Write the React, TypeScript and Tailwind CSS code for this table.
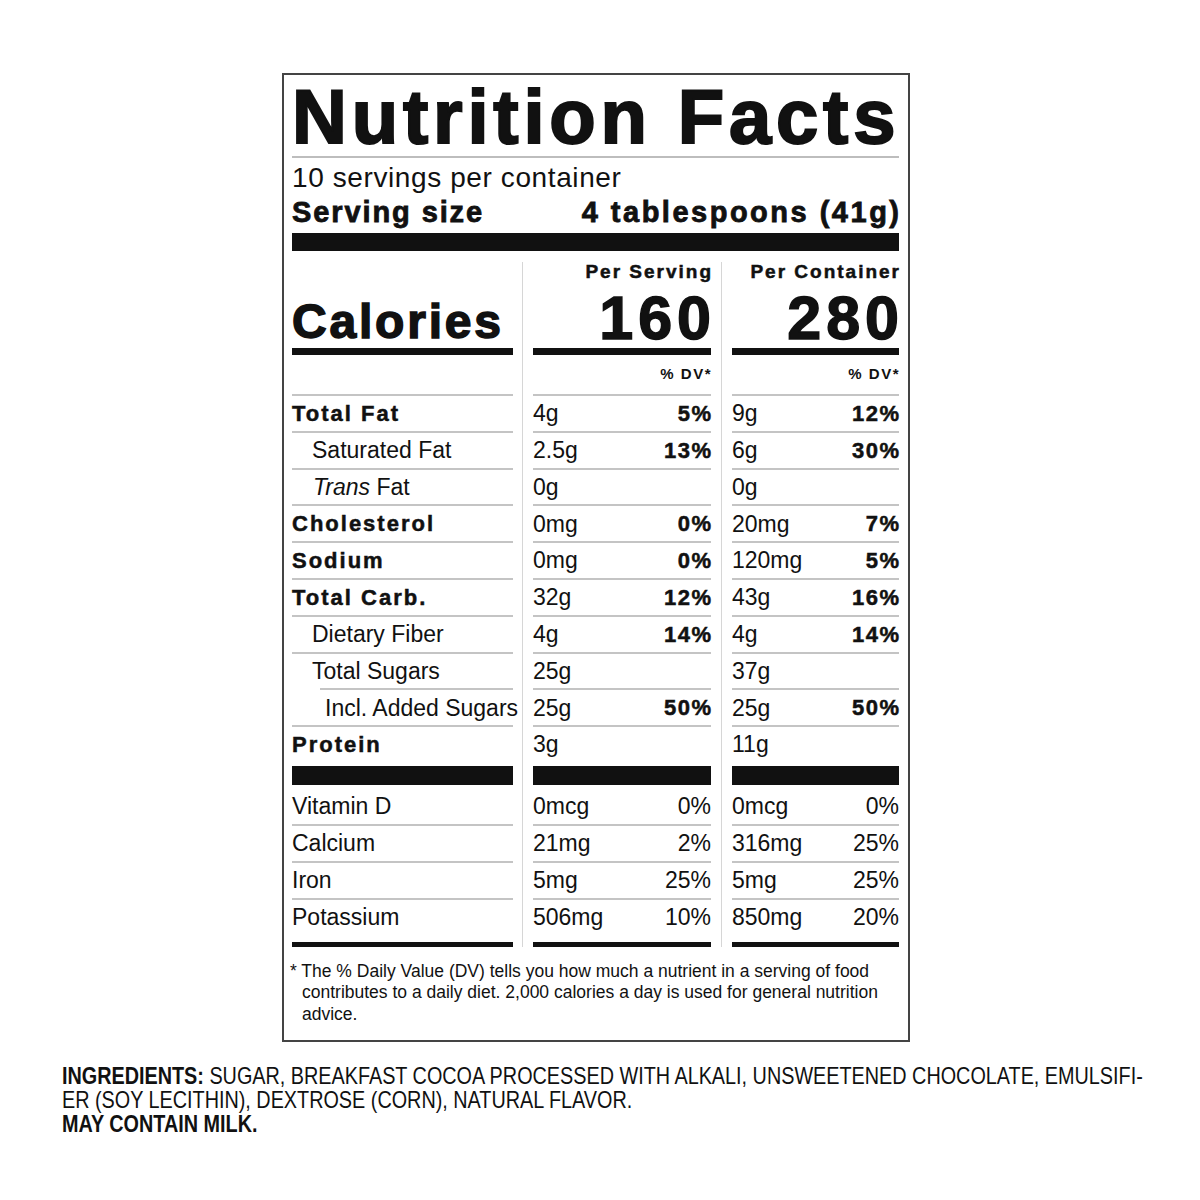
import type { ReactNode } from "react";

const rule = "h-[2px] bg-[#c4c4c4]";
const heavy = "font-bold [-webkit-text-stroke:0.5px_#111]";

type Nutrient = {
  label: ReactNode;
  bold?: boolean;
  indent?: string;
  ruleIndent?: string;
  serving: [string, string];
  container: [string, string];
  last?: boolean;
};

const nutrients: Nutrient[] = [
  { label: "Total Fat", bold: true, serving: ["4g", "5%"], container: ["9g", "12%"] },
  { label: "Saturated Fat", indent: "pl-[20px]", serving: ["2.5g", "13%"], container: ["6g", "30%"] },
  {
    label: (
      <span>
        <i>Trans</i> Fat
      </span>
    ),
    indent: "pl-[21px]",
    serving: ["0g", ""],
    container: ["0g", ""],
  },
  { label: "Cholesterol", bold: true, serving: ["0mg", "0%"], container: ["20mg", "7%"] },
  { label: "Sodium", bold: true, serving: ["0mg", "0%"], container: ["120mg", "5%"] },
  { label: "Total Carb.", bold: true, serving: ["32g", "12%"], container: ["43g", "16%"] },
  { label: "Dietary Fiber", indent: "pl-[20px]", serving: ["4g", "14%"], container: ["4g", "14%"] },
  { label: "Total Sugars", indent: "pl-[20px]", ruleIndent: "ml-[28px]", serving: ["25g", ""], container: ["37g", ""] },
  { label: "Incl. Added Sugars", indent: "pl-[33px]", serving: ["25g", "50%"], container: ["25g", "50%"] },
  { label: "Protein", bold: true, serving: ["3g", ""], container: ["11g", ""], last: true },
];

const vitamins: { label: string; serving: [string, string]; container: [string, string] }[] = [
  { label: "Vitamin D", serving: ["0mcg", "0%"], container: ["0mcg", "0%"] },
  { label: "Calcium", serving: ["21mg", "2%"], container: ["316mg", "25%"] },
  { label: "Iron", serving: ["5mg", "25%"], container: ["5mg", "25%"] },
  { label: "Potassium", serving: ["506mg", "10%"], container: ["850mg", "20%"] },
];

function Tri({ children }: { children: [ReactNode, ReactNode, ReactNode] }) {
  return (
    <div className="grid grid-cols-[231px_199px_177px]">
      <div className="pr-[9px] border-r border-[#d6d6d6] flex flex-col">{children[0]}</div>
      <div className="px-[10px] border-r border-[#d6d6d6] flex flex-col">{children[1]}</div>
      <div className="pl-[10px] flex flex-col">{children[2]}</div>
    </div>
  );
}

function Amount({ value, pct, boldPct, last, h }: { value: string; pct: string; boldPct: boolean; last?: boolean; h: string }) {
  return (
    <>
      <div className={`${h} flex items-center justify-between text-[23px]`}>
        <span>{value}</span>
        <span className={boldPct ? `${heavy} text-[22px] tracking-[1.5px] mr-[-1.5px]` : ""}>{pct}</span>
      </div>
      {!last && <div className={rule} />}
    </>
  );
}

export default function App() {
  return (
    <div className="w-[1200px] h-[1200px] overflow-hidden pt-[73px] bg-white text-[#111] font-['Liberation_Sans',Arial,sans-serif]">
      <div className="ml-[282px] w-[628px] border-2 border-[#444] pl-[8px] pr-[9px] pt-[4px] pb-[15px]">
        <h1 className="text-[76px] leading-[76px] h-[76px] font-bold tracking-[4.8px] whitespace-nowrap [-webkit-text-stroke:2px_#111]">
          Nutrition Facts
        </h1>
        <div className="mt-[1px] h-[2px] bg-[#bdbdbd]" />
        <p className="mt-[4px] text-[28px] leading-[32px] tracking-[0.6px]">10 servings per container</p>
        <div className={`mt-[3px] flex justify-between text-[29px] leading-[30px] font-bold [-webkit-text-stroke:0.8px_#111]`}>
          <span className="tracking-[1.9px]">Serving size</span>
          <span className="tracking-[2.5px] mr-[-2.5px]">4 tablespoons (41g)</span>
        </div>
        <div className="mt-[6px] h-[18px] bg-[#111]" />

        <div className="mt-[11px]">
          <Tri>
            <div className="flex-1 flex items-end">
              <span className="text-[48px] leading-[48px] mb-[2px] font-bold tracking-[2.8px] [-webkit-text-stroke:1.5px_#111]">
                Calories
              </span>
            </div>
            <div className="text-right">
              <div className="text-[19px] leading-[19px] font-bold tracking-[2px] mr-[-2px] [-webkit-text-stroke:0.5px_#111]">Per Serving</div>
              <div className="mt-[7px] text-[61px] leading-[60px] font-bold tracking-[5px] mr-[-5px] [-webkit-text-stroke:1.5px_#111]">160</div>
            </div>
            <div className="text-right">
              <div className="text-[19px] leading-[19px] font-bold tracking-[2px] mr-[-2px] [-webkit-text-stroke:0.5px_#111]">Per Container</div>
              <div className="mt-[7px] text-[61px] leading-[60px] font-bold tracking-[5px] mr-[-5px] [-webkit-text-stroke:1.5px_#111]">280</div>
            </div>
          </Tri>
          <Tri>
            <div className="h-[7px] bg-[#111]" />
            <div className="h-[7px] bg-[#111]" />
            <div className="h-[7px] bg-[#111]" />
          </Tri>
          <Tri>
            <div className="h-[39px]" />
            <div className="h-[39px] flex items-center justify-end text-[15px] font-bold tracking-[1.5px] mr-[-1px]">% DV*</div>
            <div className="h-[39px] flex items-center justify-end text-[15px] font-bold tracking-[1.5px] mr-[-1px]">% DV*</div>
          </Tri>
          <Tri>
            <div className={rule} />
            <div className={rule} />
            <div className={rule} />
          </Tri>

          {nutrients.map((n, i) => (
            <Tri key={i}>
              <>
                <div
                  className={`h-[34.8px] flex items-center whitespace-nowrap ${n.indent ?? ""} ${
                    n.bold ? `${heavy} text-[22px] tracking-[2px]` : "text-[23px]"
                  }`}
                >
                  {n.label}
                </div>
                {!n.last && <div className={`${rule} ${n.ruleIndent ?? ""}`} />}
              </>
              <Amount h="h-[34.8px]" value={n.serving[0]} pct={n.serving[1]} boldPct last={n.last} />
              <Amount h="h-[34.8px]" value={n.container[0]} pct={n.container[1]} boldPct last={n.last} />
            </Tri>
          ))}

          <Tri>
            <div className="mt-[4px] h-[19px] bg-[#111]" />
            <div className="mt-[4px] h-[19px] bg-[#111]" />
            <div className="mt-[4px] h-[19px] bg-[#111]" />
          </Tri>

          <Tri>
            <div className="h-[4px]" />
            <div className="h-[4px]" />
            <div className="h-[4px]" />
          </Tri>

          {vitamins.map((v, i) => {
            const last = i === vitamins.length - 1;
            return (
              <Tri key={v.label}>
                <>
                  <div className="h-[35px] flex items-center text-[23px]">{v.label}</div>
                  {!last && <div className={rule} />}
                </>
                <Amount h="h-[35px]" value={v.serving[0]} pct={v.serving[1]} boldPct={false} last={last} />
                <Amount h="h-[35px]" value={v.container[0]} pct={v.container[1]} boldPct={false} last={last} />
              </Tri>
            );
          })}

          <Tri>
            <div className="mt-[7px] h-[5px] bg-[#111]" />
            <div className="mt-[7px] h-[5px] bg-[#111]" />
            <div className="mt-[7px] h-[5px] bg-[#111]" />
          </Tri>
        </div>

        <p className="mt-[14px] text-[17.5px] leading-[21.5px] pl-[12px] -indent-[12px] ml-[-2px] whitespace-nowrap">
          * The % Daily Value (DV) tells you how much a nutrient in a serving of food
          <br />
          contributes to a daily diet. 2,000 calories a day is used for general nutrition
          <br />
          advice.
        </p>
      </div>

      <div className="ml-[62px] mt-[22px] text-[24px] leading-[24px] whitespace-nowrap origin-left scale-x-[0.825] w-[1350px] uppercase">
        <div>
          <b>Ingredients:</b> Sugar, Breakfast Cocoa Processed with Alkali, Unsweetened Chocolate, Emulsifi-
        </div>
        <div>Er (Soy Lecithin), Dextrose (Corn), Natural Flavor.</div>
        <div className="font-bold">May Contain Milk.</div>
      </div>
    </div>
  );
}
